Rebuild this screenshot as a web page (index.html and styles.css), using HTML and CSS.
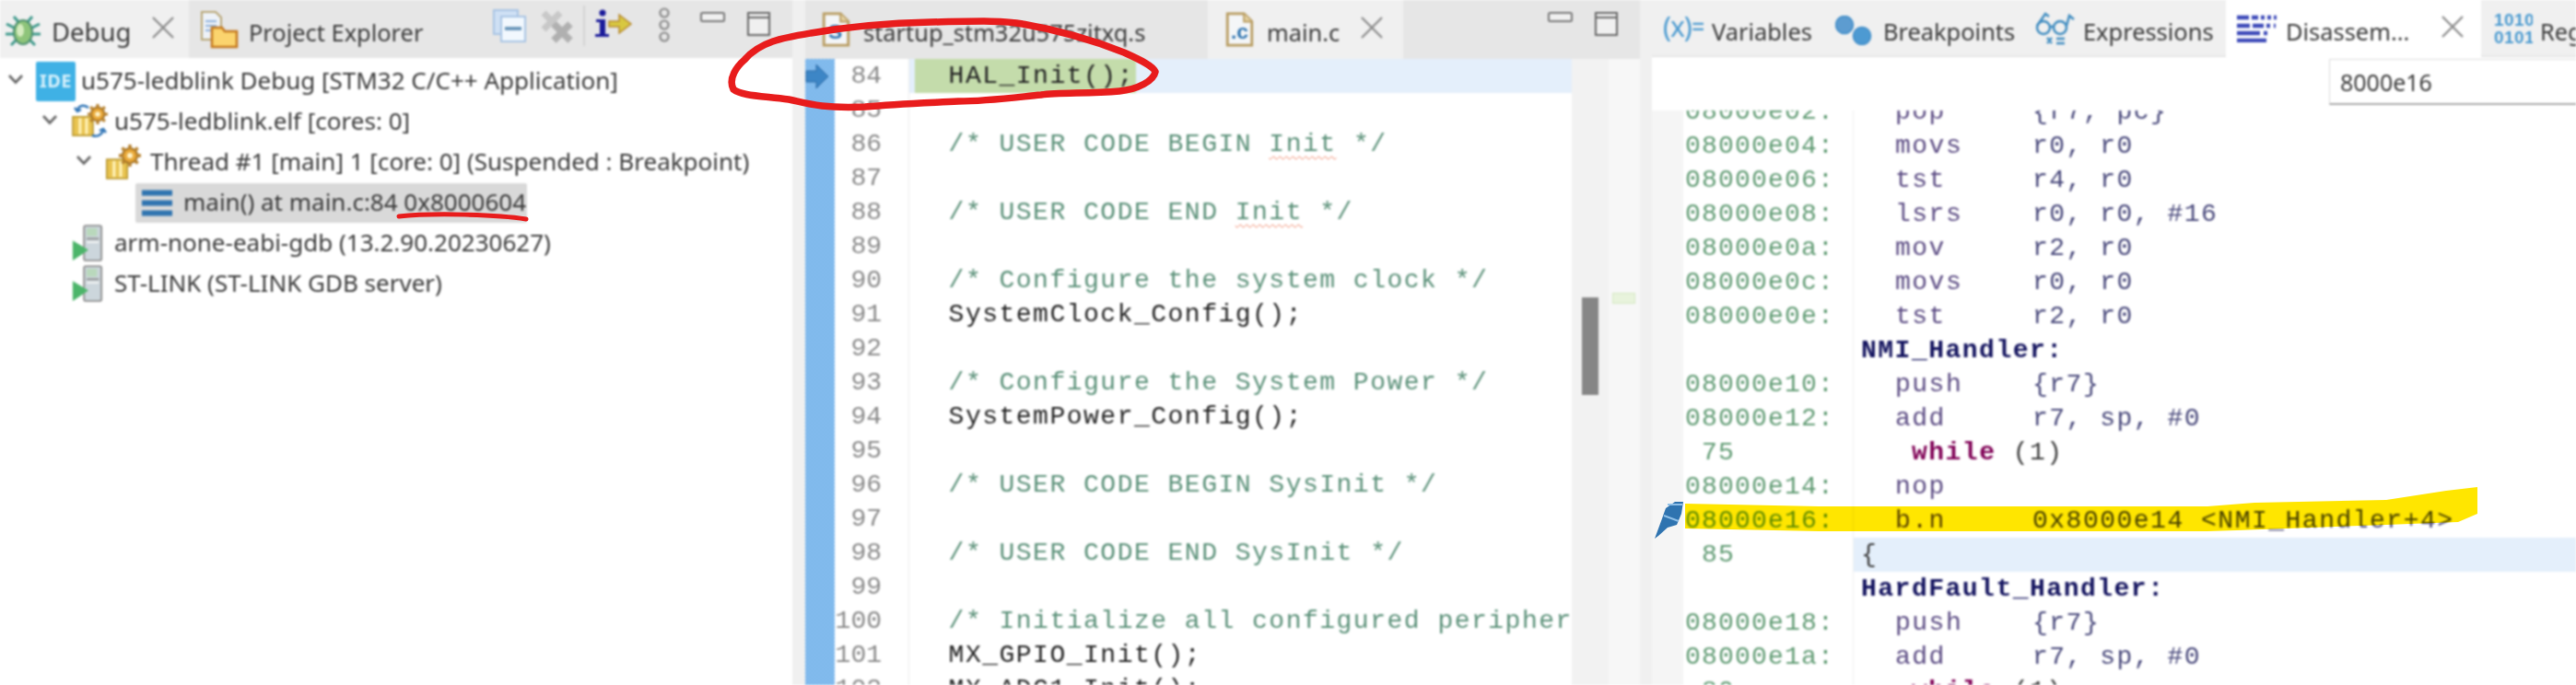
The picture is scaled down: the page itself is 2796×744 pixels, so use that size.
FILE: index.html
```html
<!DOCTYPE html>
<html lang="en">
<head>
<meta charset="utf-8">
<title>STM32CubeIDE debug</title>
<link rel="stylesheet" href="styles.css">
</head>
<body>
<svg class="defs" width="0" height="0" aria-hidden="true">
  <symbol id="x" viewBox="0 0 24 24"><path d="M1 1L23 23M23 1L1 23" fill="none" stroke="#8a8a8a" stroke-width="2.2"/></symbol>
  <symbol id="min" viewBox="0 0 27 11"><rect x="1" y="1" width="25" height="9" rx="1.5" fill="#f0f0f0" stroke="#777" stroke-width="2"/></symbol>
  <symbol id="max" viewBox="0 0 25 26"><rect x="1" y="1" width="23" height="24" fill="#f0f0f0" stroke="#666" stroke-width="2"/><path d="M1 6H24" stroke="#666" stroke-width="2"/></symbol>
  <symbol id="chev" viewBox="0 0 18 12"><path d="M2 2L9 9.5L16 2" fill="none" stroke="#666" stroke-width="2.6"/></symbol>
  <symbol id="gear" viewBox="0 0 24 24"><circle cx="12" cy="12" r="8" fill="#e9a93a" stroke="#9a6a20" stroke-width="2"/><circle cx="12" cy="12" r="3" fill="#fff3c8"/><path d="M12 0v5M12 19v5M0 12h5M19 12h5M3.5 3.5l3.5 3.5M17 17l3.500 3.500M20.500 3.500L17 7M7 17l-3.500 3.500" stroke="#b57f2a" stroke-width="3.400"/></symbol>
  <symbol id="bars" viewBox="0 0 30 28"><rect x="1" y="1" width="28" height="26" fill="#e8c350" stroke="#b8962e" stroke-width="2"/><path d="M11 3V25M20 3V25" stroke="#fff2b8" stroke-width="4"/></symbol>
  <symbol id="gdb" viewBox="0 0 36 42"><rect x="14" y="1" width="20" height="40" rx="2" fill="#ccd6dc" stroke="#8f8f8f" stroke-width="2"/><rect x="17" y="4" width="12" height="9" fill="#b9d8bc"/><path d="M17 16H31" stroke="#8f8f8f" stroke-width="2"/><path d="M17 20H31" stroke="#f4f4f4" stroke-width="2"/><path d="M1 18L19 29L1 41Z" fill="#4cb56a"/></symbol>
  <symbol id="doc" viewBox="0 0 32 40"><path d="M2 2H21L30 11V38H2Z" fill="#f4f6f8" stroke="#b89c60" stroke-width="3"/><path d="M21 2V11H30" fill="#e6d4a4" stroke="#b89c60" stroke-width="2"/></symbol>
</svg>

<main class="app">
  <section class="panel left">
    <header class="tabbar gray">
      <div class="tab on debugtab">
        <svg class="ic" width="40" height="40" viewBox="0 0 40 40"><path d="M10 6l7 8M30 6l-7 8M2 14l10 5M38 14l-10 5M1 25h10M39 25H29M7 37l8-8M33 37l-8-8" stroke="#3f9a8c" stroke-width="3" fill="none"/><ellipse cx="20" cy="23" rx="10" ry="13" fill="#8ec47a" stroke="#4c8f70" stroke-width="2"/><ellipse cx="17" cy="21" rx="4" ry="7" fill="#d6ecc0"/></svg>
        <span>Debug</span>
        <svg class="close" width="24" height="24"><use href="#x"/></svg>
      </div>
      <div class="tab explorertab">
        <svg class="ic" width="42" height="42" viewBox="0 0 42 42"><path d="M2 2H17L23 8V32H2Z" fill="#eef2f8" stroke="#b8a676" stroke-width="2"/><path d="M6 12H18M6 17H18M6 22H14" stroke="#8db1dc" stroke-width="2"/><path d="M13 19H24L27 23H40V40H13Z" fill="#fbd46e" stroke="#c4781e" stroke-width="2.500"/></svg>
        <span>Project Explorer</span>
      </div>
      <div class="tools">
        <svg width="36" height="36" viewBox="0 0 36 36"><rect x="1" y="1" width="26" height="26" fill="#cfe0f4" stroke="#a8c4e4" stroke-width="2"/><rect x="9" y="8" width="26" height="27" fill="#f2f8fe" stroke="#a8c4e4" stroke-width="2"/><path d="M13 21H31" stroke="#5f8fb5" stroke-width="3.500"/></svg>
        <svg class="t2" width="40" height="42" viewBox="0 0 40 42"><path d="M4 8L22 26M22 8L4 26" stroke="#c8c8c8" stroke-width="7"/><path d="M15 20L33 38M33 20L15 38" stroke="#b0b0b0" stroke-width="7.500"/></svg>
        <i class="sep"></i>
        <svg class="t3" width="42" height="32" viewBox="0 0 42 32"><circle cx="9" cy="4" r="3.500" fill="#1a1a9a"/><path d="M2 11H12V27H16V30H1V27H6V14H2Z" fill="#1a1a9a"/><path d="M16 13H27V6L40 16L27 26V19H16Z" fill="#d8c840" stroke="#b88a30" stroke-width="1.500"/></svg>
        <svg class="t4" width="14" height="38" viewBox="0 0 14 38"><circle cx="7" cy="6" r="4.500" fill="none" stroke="#888" stroke-width="2.200"/><circle cx="7" cy="19" r="4.500" fill="none" stroke="#888" stroke-width="2.200"/><circle cx="7" cy="32" r="4.500" fill="none" stroke="#888" stroke-width="2.200"/></svg>
        <svg class="t5" width="27" height="11"><use href="#min"/></svg>
        <svg class="t6" width="25" height="26"><use href="#max"/></svg>
      </div>
    </header>
    <ul class="tree">
      <li class="row d0">
        <svg class="twist" width="18" height="12"><use href="#chev"/></svg>
        <svg class="ic" width="43" height="43" viewBox="0 0 43 43"><rect width="43" height="43" rx="2" fill="#3fb1e5"/><text x="21.500" y="28" text-anchor="middle" class="idetxt">IDE</text></svg>
        <span class="lbl">u575-ledblink Debug [STM32 C/C++ Application]</span>
      </li>
      <li class="row d1">
        <svg class="twist" width="18" height="12"><use href="#chev"/></svg>
        <svg class="ic" width="40" height="40" viewBox="0 0 40 40"><svg x="0" y="14" width="24" height="22"><use href="#bars"/></svg><svg x="17" y="1" width="22" height="22"><use href="#gear"/></svg><path d="M18 5C12 1 8 3 6 7M3 5l3 4 4-2" fill="none" stroke="#2f74b5" stroke-width="2.500"/><path d="M22 35c5 2 10 0 12-5M37 32l-3-4-4 2" fill="none" stroke="#2f74b5" stroke-width="2.500"/></svg>
        <span class="lbl">u575-ledblink.elf [cores: 0]</span>
      </li>
      <li class="row d2">
        <svg class="twist" width="18" height="12"><use href="#chev"/></svg>
        <svg class="ic" width="39" height="38" viewBox="0 0 39 38"><svg x="0" y="15" width="24" height="23"><use href="#bars"/></svg><svg x="14" y="0" width="24" height="24"><use href="#gear"/></svg></svg>
        <span class="lbl">Thread #1 [main] 1 [core: 0] (Suspended : Breakpoint)</span>
      </li>
      <li class="row d3">
        <div class="sel">
          <svg class="ic" width="33" height="29" viewBox="0 0 33 29"><path d="M0 3.500H33M0 14.500H33M0 25.500H33" stroke="#2f74b0" stroke-width="6"/></svg>
          <span class="lbl">main() at main.c:84 0x8000604</span>
        </div>
      </li>
      <li class="row d4">
        <svg class="ic" width="34" height="40"><use href="#gdb"/></svg>
        <span class="lbl">arm-none-eabi-gdb (13.2.90.20230627)</span>
      </li>
      <li class="row d4">
        <svg class="ic" width="34" height="40"><use href="#gdb"/></svg>
        <span class="lbl">ST-LINK (ST-LINK GDB server)</span>
      </li>
    </ul>
  </section>

  <section class="panel middle">
    <header class="tabbar gray tall">
      <div class="tab starttab">
        <svg class="ic" width="31" height="38" viewBox="0 0 32 40"><use href="#doc"/><text x="15" y="31" text-anchor="middle" class="stxt">S</text></svg>
        <span>startup_stm32u575zitxq.s</span>
      </div>
      <div class="tab on maintab">
        <svg class="ic" width="31" height="38" viewBox="0 0 32 40"><use href="#doc"/><text x="16" y="31" text-anchor="middle" class="ctxt">.c</text></svg>
        <span>main.c</span>
        <svg class="close" width="24" height="24"><use href="#x"/></svg>
      </div>
      <div class="tools ed">
        <svg class="t5" width="27" height="11"><use href="#min"/></svg>
        <svg class="t6" width="25" height="26"><use href="#max"/></svg>
      </div>
    </header>
    <div class="editor">
      <div class="marks">
        <svg width="26" height="28" viewBox="0 0 26 28"><path d="M1 8H12V1L25 14L12 27V20H1Z" fill="#3d86c6" stroke="#2c6aa5" stroke-width="1"/></svg>
      </div>
      <div class="nums">
        <div>84</div><div>85</div><div>86</div><div>87</div><div>88</div><div>89</div><div>90</div><div>91</div><div>92</div><div>93</div><div>94</div><div>95</div><div>96</div><div>97</div><div>98</div><div>99</div><div>100</div><div>101</div><div>102</div>
      </div>
      <div class="code">
        <div class="line current"><span class="hit">  HAL_Init();</span></div>
        <div class="line"></div>
        <div class="line cm">  /* USER CODE BEGIN <span class="spell">Init</span> */</div>
        <div class="line"></div>
        <div class="line cm">  /* USER CODE END <span class="spell">Init</span> */</div>
        <div class="line"></div>
        <div class="line cm">  /* Configure the system clock */</div>
        <div class="line">  SystemClock_Config();</div>
        <div class="line"></div>
        <div class="line cm">  /* Configure the System Power */</div>
        <div class="line">  SystemPower_Config();</div>
        <div class="line"></div>
        <div class="line cm">  /* USER CODE BEGIN SysInit */</div>
        <div class="line"></div>
        <div class="line cm">  /* USER CODE END SysInit */</div>
        <div class="line"></div>
        <div class="line cm">  /* Initialize all configured peripherals */</div>
        <div class="line">  MX_GPIO_Init();</div>
        <div class="line">  MX_ADC1_Init();</div>
      </div>
      <div class="track"><div class="thumb"></div></div>
      <div class="overview"><div class="tick"></div></div>
    </div>
  </section>

  <section class="panel right">
    <header class="tabbar light">
      <div class="tab vartab">
        <svg class="ic" width="44" height="30" viewBox="0 0 44 30"><text x="0" y="24" class="vartxt">(x)=</text></svg>
        <span>Variables</span>
      </div>
      <div class="tab bptab">
        <svg class="ic bpic" width="40" height="32" viewBox="0 0 40 32"><circle cx="10" cy="10" r="9.500" fill="#5d9cd0" stroke="#3f8cc8" stroke-width="1.500"/><circle cx="29" cy="22" r="9.500" fill="#4d9ad2" stroke="#3f8cc8" stroke-width="1.500"/></svg>
        <span>Breakpoints</span>
      </div>
      <div class="tab exprtab">
        <svg class="ic" width="44" height="38" viewBox="0 0 44 38"><circle cx="10" cy="18" r="7" fill="none" stroke="#3f8cc0" stroke-width="2.500"/><circle cx="28" cy="18" r="7" fill="none" stroke="#3f8cc0" stroke-width="2.500"/><path d="M3 16L12 3L16 6M35 16L38 5L43 9M17 17h4" fill="none" stroke="#3f8cc0" stroke-width="2.500"/><path d="M14 29l5 6M19 29l-5 6M24 30h9M24 35h9" stroke="#3f8cc0" stroke-width="2.500"/></svg>
        <span>Expressions</span>
      </div>
      <div class="tab on distab">
        <svg class="ic" width="44" height="30" viewBox="0 0 44 30"><path d="M1 3H14M17 3H24M27 3H31M34 3H38M41 3H44M1 12H15M18 12H30M33 12H37M41 12H43M1 20H26M30 20H34M1 28H33" stroke="#3b48b8" stroke-width="4.500"/></svg>
        <span>Disassem...</span>
        <svg class="close" width="24" height="24"><use href="#x"/></svg>
      </div>
      <div class="tab regtab">
        <svg class="ic" width="42" height="38" viewBox="0 0 42 38"><text x="0" y="16" class="bintxt">1010</text><text x="0" y="35" class="bintxt">0101</text></svg>
        <span>Registers</span>
      </div>
    </header>
    <div class="findrow"><input class="find" value="8000e16" aria-label="Address"></div>
    <div class="listing">
      <div class="asm"><span class="addr">08000e02:</span><span class="ins"><span class="mn">pop</span><span class="arg">{r7, pc}</span></span></div>
      <div class="asm"><span class="addr">08000e04:</span><span class="ins"><span class="mn">movs</span><span class="arg">r0, r0</span></span></div>
      <div class="asm"><span class="addr">08000e06:</span><span class="ins"><span class="mn">tst</span><span class="arg">r4, r0</span></span></div>
      <div class="asm"><span class="addr">08000e08:</span><span class="ins"><span class="mn">lsrs</span><span class="arg">r0, r0, #16</span></span></div>
      <div class="asm"><span class="addr">08000e0a:</span><span class="ins"><span class="mn">mov</span><span class="arg">r2, r0</span></span></div>
      <div class="asm"><span class="addr">08000e0c:</span><span class="ins"><span class="mn">movs</span><span class="arg">r0, r0</span></span></div>
      <div class="asm"><span class="addr">08000e0e:</span><span class="ins"><span class="mn">tst</span><span class="arg">r2, r0</span></span></div>
      <div class="asm"><span class="addr"></span><span class="ins label">NMI_Handler:</span></div>
      <div class="asm"><span class="addr">08000e10:</span><span class="ins"><span class="mn">push</span><span class="arg">{r7}</span></span></div>
      <div class="asm"><span class="addr">08000e12:</span><span class="ins"><span class="mn">add</span><span class="arg">r7, sp, #0</span></span></div>
      <div class="asm"><span class="addr src">75</span><span class="ins srcline">   <b class="kw">while</b> (1)</span></div>
      <div class="asm"><span class="addr">08000e14:</span><span class="ins"><span class="mn">nop</span></span></div>
      <div class="asm"><span class="addr">08000e16:</span><span class="ins"><span class="mn">b.n</span><span class="arg">0x8000e14 &lt;NMI_Handler+4&gt;</span></span></div>
      <div class="asm"><span class="addr src">85</span><span class="ins srcline hl">{</span></div>
      <div class="asm"><span class="addr"></span><span class="ins label">HardFault_Handler:</span></div>
      <div class="asm"><span class="addr">08000e18:</span><span class="ins"><span class="mn">push</span><span class="arg">{r7}</span></span></div>
      <div class="asm"><span class="addr">08000e1a:</span><span class="ins"><span class="mn">add</span><span class="arg">r7, sp, #0</span></span></div>
      <div class="asm"><span class="addr src">80</span><span class="ins srcline">   <b class="kw">while</b> (1)</span></div>
    </div>
  </section>
</main>

<svg class="ink marker" width="2796" height="744" viewBox="0 0 2796 744" aria-hidden="true">
  <path d="M1829 547L1974 550L2396 550L2447 546L2590 543L2655 533L2689 529V558L2668 567L2590 570L2428 576L2396 577L1974 577L1829 574Z" fill="#ffe600"/>
</svg>
<svg class="ink" width="2796" height="744" viewBox="0 0 2796 744" aria-hidden="true">
  <path d="M1796 585L1803 566L1808 552L1818 545H1827L1825 558L1820 570L1810 573L1800 582Z" fill="#2f74b0"/>
  <path d="M1810 548L1826 548M1806 560L1822 566" stroke="#8fc0e8" stroke-width="2"/>
  <path d="M939 116C890 118 875 112 856 108C825 104 805 104 796 97C790 85 800 72 808 65C825 45 850 41 880 36C920 29 965 25 1010 24C1060 23 1090 22 1110 26C1150 33 1190 45 1220 57C1240 66 1252 72 1254 78C1252 88 1235 97 1215 99C1180 102 1150 100 1130 103C1100 106 1070 110 1040 110C1000 112 970 113 939 116Z" fill="none" stroke="#e81c1c" stroke-width="7.500" stroke-linejoin="round"/>
  <path d="M433 235C470 231 540 233 571 238" fill="none" stroke="#e81c1c" stroke-width="5" stroke-linecap="round"/>
</svg>
</body>
</html>
```
FILE: styles.css
```css
* { box-sizing: border-box; }
html, body { margin: 0; padding: 0; background: #fff; }
body { width: 2796px; height: 744px; overflow: hidden; position: relative; font-family: "Noto Sans", "Open Sans", sans-serif; color: #3a3a3a; }
.defs { position: absolute; }
.app { display: flex; width: 2796px; height: 744px; overflow: hidden; background: #f0f0f0; filter: blur(0.8px); }
.panel { display: flex; flex-direction: column; background: #fff; overflow: hidden; height: 744px; }
.left { width: 860px; margin-right: 14px; }
.middle { width: 906px; margin-right: 13px; }
.right { width: 1003px; }

.tabbar { display: flex; align-items: stretch; height: 63px; flex: none; font-size: 25.4px; white-space: nowrap; overflow: hidden; }
.tabbar.tall { height: 64px; }
.gray { background: #e6e6e6; }
.light { background: #f0f0f0; height: 62px; box-shadow: inset 0 -2px 0 #e6e6e6; }
.tab { display: flex; align-items: center; flex: none; }
.tab.on { background: #f0f0f0; }
.light .tab.on { background: #fff; box-shadow: none; }
.tab span { position: relative; top: 3px; }
.close { margin-top: -4px; }
.ic { flex: none; }
.bpic { margin-top: 4px; }

.debugtab { width: 205px; padding-left: 5px; }
.debugtab span { margin-left: 11px; font-size: 27.5px; }
.debugtab .close { margin-left: 23px; }
.explorertab { padding-left: 12px; }
.explorertab span { margin-left: 11px; }
.tools { margin-left: auto; display: flex; align-items: flex-start; padding: 10px 24px 0 0; }
.tools .t2 { margin: -4px 0 0 15px; }
.tools .sep { width: 2px; height: 44px; background: #d4d4d4; margin: -4px 0 0 7px; }
.tools .t3 { margin-left: 10px; }
.tools .t4 { margin: -2px 0 0 27px; }
.tools .t5 { margin: 3px 0 0 32px; }
.tools .t6 { margin: 3px 0 0 24px; }
.tools.ed { padding-right: 24px; }

.tree { list-style: none; margin: 0; padding: 3px 0 0; font-size: 26px; white-space: nowrap; }
.row { display: flex; align-items: center; height: 44px; }
.twist { flex: none; margin-top: -4px; }
.d0 { padding-left: 8px; }
.d0 .twist { margin-right: 13px; }
.d1 { padding-left: 45px; }
.d1 .twist { margin-right: 15px; }
.d2 { padding-left: 82px; }
.d2 .twist { margin-right: 15px; }
.d3 { padding-left: 147px; }
.d4 { padding-left: 78px; }
.lbl { margin: -3px 0 0 6px; }
.d4 .lbl { margin-left: 12px; }
.d1 .lbl { margin-left: 6px; }
.d2 .lbl { margin-left: 9px; }
.sel { display: flex; align-items: center; width: 425px; height: 43px; padding-left: 7px; background: #d9d9d9; border-radius: 2px; }
.sel .lbl { margin-left: 12px; }

.starttab { width: 437px; padding-left: 18px; }
.starttab span { margin-left: 14px; }
.maintab { width: 212px; padding-left: 19px; }
.maintab span { margin-left: 14px; }
.maintab .close { margin-left: 23px; }
.stxt { font: bold 24px "Liberation Sans", sans-serif; fill: #2f74b0; }
.ctxt { font: bold 24px "Liberation Sans", sans-serif; fill: #2f74b0; }

.editor { display: flex; flex: 1; min-height: 0; font: 28px/37px "Liberation Mono", monospace; letter-spacing: 1.5px; overflow: hidden; }
.marks { flex: none; width: 32px; padding: 5px 0 0 0; background: conic-gradient(#6fb0ea 25%, #93c4f0 0 50%, #6fb0ea 0 75%, #93c4f0 0) 0 0 / 4px 4px; }
.marks svg { display: block; }
.nums { flex: none; width: 81px; padding-right: 29px; text-align: right; color: #8a8a8a; border-right: 1px solid #ececec; letter-spacing: 0; }
.nums div { height: 37px; }
.code { flex: none; width: 719px; padding-left: 6px; color: #222; overflow: hidden; }
.line { height: 37px; white-space: pre; }
.current { background: #e4effb; margin-left: -6px; padding-left: 6px; }
.hit { display: inline-block; width: 240px; height: 37px; background: #c4dcab; }
.cm { color: #5a9078; }
.spell { text-decoration: underline wavy #ef8060 1px; text-underline-offset: 5px; }
.track { flex: none; width: 40px; padding: 259px 11px 0; background: #f2f2f2; }
.thumb { height: 106px; background: #868686; }
.overview { flex: none; width: 35px; padding: 254px 6px 0 4px; background: #f7f7f7; }
.tick { height: 12px; background: #e8f3dc; border: 1px solid #d6e8c4; }

.vartab { padding-left: 12px; width: 187px; }
.vartab span { margin-left: 9px; }
.vartxt { font: 30px "Noto Sans", sans-serif; fill: #4a9ad0; letter-spacing: -1px; }
.bptab { width: 212px; padding-left: 12px; }
.bptab span { margin-left: 12px; }
.exprtab { width: 224px; padding-left: 16px; }
.exprtab span { margin-left: 9px; }
.distab { width: 277px; padding-left: 11px; }
.distab span { margin-left: 10px; }
.distab .close { margin-left: 35px; }
.regtab { flex: 1; padding-left: 14px; min-width: 0; }
.regtab span { margin-left: 8px; }
.bintxt { font: bold 19px "Liberation Sans", sans-serif; fill: #4a9ad0; letter-spacing: 0.400px; }

.findrow { display: flex; justify-content: flex-end; flex: none; height: 58px; padding-top: 2px; }
.find { width: 268px; height: 50px; padding: 0 11px; border: 1px solid #dcdcdc; border-right: 0; border-bottom: 2px solid #a8a8a8; outline: 0; background: #fff; color: #3a3a3a; font: 25px "Noto Sans", sans-serif; }
.listing { flex: 1; min-height: 0; overflow: hidden; font: 28px/37px "Liberation Mono", monospace; letter-spacing: 1.5px; background: linear-gradient(90deg, #f5f5f5 34px, #fff 34px); }
.asm { display: flex; height: 37px; margin-left: 34px; }
.asm:first-child { margin-top: -17px; }
.addr { flex: none; width: 185px; padding-left: 2px; color: #5f9a72; border-right: 1px solid #f0f0f0; letter-spacing: 1.2px; }
.addr.src { padding-left: 20px; }
.ins { flex: 1; padding-left: 8px; min-width: 0; white-space: pre; }
.mn { display: inline-block; width: 149px; margin-left: 37px; color: #5a4a82; }
.arg { color: #47477a; }
.label { color: #14145f; font-weight: bold; }
.srcline { color: #3a3a3a; }
.kw { color: #7f0055; }
.hl { background: #e4effb; }

.ink { position: absolute; left: 0; top: 0; pointer-events: none; }
.marker { mix-blend-mode: multiply; }
.idetxt { font: bold 20px "Noto Sans", sans-serif; fill: #d6f0fb; letter-spacing: 0.5px; }
```
